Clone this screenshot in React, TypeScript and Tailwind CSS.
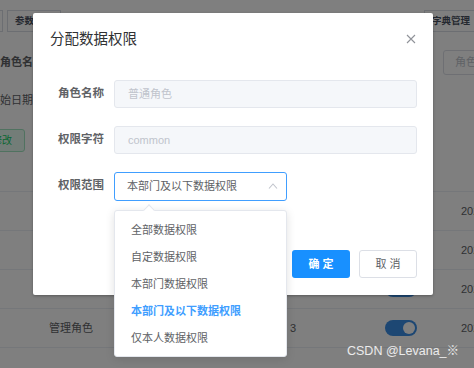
import React from "react";

const rows = [
  { name: "超级管理员", sort: "1", on: true, date: "2023-04-12 10:21:08" },
  { name: "普通角色", sort: "2", on: true, date: "2023-04-12 10:21:08" },
  { name: "测试角色", sort: "2", on: true, date: "2023-05-06 09:15:32" },
  { name: "管理角色", sort: "3", on: true, date: "2023-05-08 14:02:11" },
];

const scopes = ["全部数据权限", "自定数据权限", "本部门数据权限", "本部门及以下数据权限", "仅本人数据权限"];

function Toggle({ on }: { on: boolean }) {
  return (
    <div className={`w-[32px] h-[16px] rounded-full flex items-center px-[2px] ${on ? "bg-[#3a8ee6] justify-end" : "bg-[#dcdfe6]"}`}>
      <div className="w-[12px] h-[12px] rounded-full bg-white" />
    </div>
  );
}

function BackgroundPage() {
  return (
    <div className="text-[11px] text-[#606266]">
      <div className="h-[10px]" />
      {/* tags view */}
      <div className="h-[22px] flex items-stretch text-[9.5px] text-[#495060]">
        <div className="ml-[-28px] w-[31px] border border-[#d8dce5]" />
        <div className="ml-[4px] px-[7px] border border-[#d8dce5] flex items-center font-bold">参数设置</div>
        <div className="flex-1" />
        <div className="mr-[-4px] px-[7px] border border-[#d8dce5] flex items-center font-bold">字典管理</div>
      </div>
      {/* search form */}
      <div className="mt-[18px] h-[25px] flex items-center">
        <span className="font-bold">角色名称</span>
        <div className="ml-auto mr-[-29px] w-[60px] h-full border border-[#dcdfe6] rounded-[3px] flex items-center pl-[11px] text-[#c0c4cc]">角色名称</div>
      </div>
      <div className="mt-[13px] h-[25px] flex items-center">
        <span className="ml-[-11px] text-[#606266]">开始日期</span>
      </div>
      <div className="mt-[16px] h-[23px] flex items-center">
        <div className="ml-[-21px] w-[46px] h-full rounded-[3px] border border-[#a1e5c0] bg-[#e7faf0] text-[#13ce66] flex items-center justify-center text-[10px]">修改</div>
      </div>
      {/* table */}
      <div className="mt-[6px]">
        <div className="h-[34px] border-b border-[#ebeef5]" />
        {rows.map((r, i) => (
          <div key={i} className="h-[39px] border-b border-[#ebeef5] grid grid-cols-[49px_241px_95px_76px_1fr] items-center">
            <div />
            <div>{r.name}</div>
            <div>{r.sort}</div>
            <div><Toggle on={r.on} /></div>
            <div className="whitespace-nowrap">{r.date}</div>
          </div>
        ))}
      </div>
    </div>
  );
}

function Field({ label, children }: { label: string; children: React.ReactNode }) {
  return (
    <div className="flex items-center h-[28px]">
      <div className="w-[64px] pr-[10px] text-right text-[11.5px] font-bold text-[#606266] whitespace-nowrap">{label}</div>
      {children}
    </div>
  );
}

export default function App() {
  return (
    <div className="relative w-[474px] h-[368px] overflow-hidden bg-white font-['Liberation_Sans','Noto_Sans_CJK_SC',sans-serif] leading-none">
      <BackgroundPage />
      <div className="absolute inset-0 bg-black/50" />

      {/* dialog */}
      <div className="absolute left-[33px] top-[13px] w-[400px] h-[282px] bg-white rounded-[2px] shadow-[0_1px_3px_rgba(0,0,0,0.3)]">
        <div className="mt-[16px] h-[20px] px-[17px] flex items-center justify-between">
          <span className="text-[14.5px] text-[#303133]">分配数据权限</span>
          <svg width="10" height="10" viewBox="0 0 10 10">
            <path d="M1 1 L9 9 M9 1 L1 9" stroke="#909399" strokeWidth="1.1" />
          </svg>
        </div>
        <div className="mt-[31px] pl-[17px] pr-[16px] flex flex-col gap-[18px]">
          <Field label="角色名称">
            <div className="flex-1 h-full rounded-[3px] border border-[#e4e7ed] bg-[#f5f7fa] flex items-center pl-[13px] text-[11px] text-[#c0c4cc]">普通角色</div>
          </Field>
          <Field label="权限字符">
            <div className="flex-1 h-full rounded-[3px] border border-[#e4e7ed] bg-[#f5f7fa] flex items-center pl-[13px] text-[11px] text-[#c0c4cc]">common</div>
          </Field>
          <Field label="权限范围">
            <div className="w-[173px] h-[29px] rounded-[3px] border border-[#409eff] flex items-center justify-between pl-[12px] pr-[8px] text-[11px] text-[#606266]">
              <span>本部门及以下数据权限</span>
              <svg width="10" height="6" viewBox="0 0 10 6">
                <path d="M1 5.5 L5 1 L9 5.5" fill="none" stroke="#c0c4cc" strokeWidth="1.1" />
              </svg>
            </div>
          </Field>
        </div>
        <div className="mt-[50px] pr-[16px] flex justify-end gap-[9px]">
          <div className="w-[58px] h-[28px] rounded-[3px] bg-[#1890ff] text-white text-[11px] font-bold flex items-center justify-center">确 定</div>
          <div className="w-[58px] h-[28px] rounded-[3px] border border-[#dcdfe6] bg-white text-[#606266] text-[11px] flex items-center justify-center">取 消</div>
        </div>
      </div>

      {/* select dropdown */}
      <div className="absolute left-[114px] top-[210px] w-[173px] h-[147px] bg-white border border-[#e4e7ed] rounded-[3px] shadow-[0_2px_10px_rgba(0,0,0,0.12)] py-[6px]">
        <div className="absolute left-[30px] top-[-5px] w-[8px] h-[8px] rotate-45 bg-white border-l border-t border-[#e4e7ed]" />
        {scopes.map((s, i) => (
          <div
            key={s}
            className={`h-[27px] flex items-center pl-[16px] text-[11px] ${i === 3 ? "text-[#409eff] font-bold" : "text-[#606266]"}`}
          >
            {s}
          </div>
        ))}
      </div>

      <div className="absolute left-[347px] top-[345px] text-[12.5px] text-white/85 whitespace-nowrap">CSDN @Levana_※</div>
    </div>
  );
}
